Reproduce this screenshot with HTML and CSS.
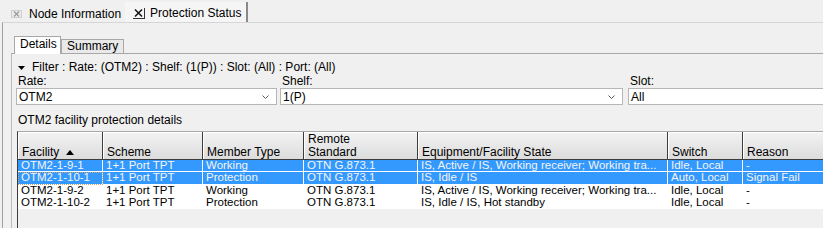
FILE: index.html
```html
<!DOCTYPE html>
<html lang="en">
<head>
    <meta charset="UTF-8">
    <meta name="viewport" content="width=device-width, initial-scale=1.0">
    <title>Protection Status</title>
    <link rel="stylesheet" href="styles.css">
</head>
<body>
    <div class="window">
        <div class="doc-tabs">
            <div class="doc-tab">
                <svg class="close-icon faded" width="11" height="8" viewBox="0 0 11 8">
                    <rect x="0.5" y="0.5" width="10" height="7" fill="#ebebeb" stroke="#cfcfcf"/>
                    <path d="M3 1.5 L8 6.5 M8 1.5 L3 6.5" stroke="#9a9a9a" stroke-width="1.2"/>
                </svg>
                <span>Node Information</span>
            </div>
            <div class="doc-tab active">
                <svg class="close-icon" width="13" height="11" viewBox="0 0 13 11">
                    <path d="M2 1.5 L9 8.5 M9 1.5 L2 8.5" stroke="#111" stroke-width="1.5"/>
                    <path d="M0 10.5 H12 M11.5 0 V11" stroke="#333" stroke-width="1"/>
                </svg>
                <span>Protection Status</span>
            </div>
        </div>

        <div class="doc-panel">
            <div class="sub-tabs">
                <div class="sub-tab selected">Details</div>
                <div class="sub-tab">Summary</div>
            </div>

            <div class="sub-panel">
                <div class="filter-title">
                    <svg width="7" height="4" viewBox="0 0 7 4"><path d="M0 0 H7 L3.5 4 Z" fill="#000"/></svg>
                    <span>Filter : Rate: (OTM2) : Shelf: (1(P)) : Slot: (All) : Port: (All)</span>
                </div>

                <div class="fields">
                    <div class="field rate">
                        <label>Rate:</label>
                        <div class="combo"><span>OTM2</span><svg class="chevron" width="7" height="4" viewBox="0 0 7 4"><path d="M0.5 0.5 L3.5 3.5 L6.5 0.5" fill="none" stroke="#5a5a5a"/></svg></div>
                    </div>
                    <div class="field shelf">
                        <label>Shelf:</label>
                        <div class="combo"><span>1(P)</span><svg class="chevron" width="7" height="4" viewBox="0 0 7 4"><path d="M0.5 0.5 L3.5 3.5 L6.5 0.5" fill="none" stroke="#5a5a5a"/></svg></div>
                    </div>
                    <div class="field slot">
                        <label>Slot:</label>
                        <div class="combo"><span>All</span></div>
                    </div>
                </div>

                <div class="caption">OTM2 facility protection details</div>

                <div class="table-wrap">
                    <table class="grid">
                        <colgroup>
                            <col class="c-facility">
                            <col class="c-scheme">
                            <col class="c-member">
                            <col class="c-remote">
                            <col class="c-state">
                            <col class="c-switch">
                            <col class="c-reason">
                        </colgroup>
                        <tr class="head">
                            <th>Facility <svg class="sort" width="8" height="5" viewBox="0 0 8 5"><path d="M0 5 L4 0 L8 5 Z" fill="#000"/></svg></th>
                            <th>Scheme</th>
                            <th>Member Type</th>
                            <th>Remote<br>Standard</th>
                            <th>Equipment/Facility State</th>
                            <th>Switch</th>
                            <th>Reason</th>
                        </tr>
                        <tr class="selected">
                            <td>OTM2-1-9-1</td>
                            <td>1+1 Port TPT</td>
                            <td>Working</td>
                            <td>OTN G.873.1</td>
                            <td>IS, Active / IS, Working receiver; Working tra...</td>
                            <td>Idle, Local</td>
                            <td>-</td>
                        </tr>
                        <tr class="selected">
                            <td class="focus">OTM2-1-10-1</td>
                            <td>1+1 Port TPT</td>
                            <td>Protection</td>
                            <td>OTN G.873.1</td>
                            <td>IS, Idle / IS</td>
                            <td>Auto, Local</td>
                            <td>Signal Fail</td>
                        </tr>
                        <tr>
                            <td>OTM2-1-9-2</td>
                            <td>1+1 Port TPT</td>
                            <td>Working</td>
                            <td>OTN G.873.1</td>
                            <td>IS, Active / IS, Working receiver; Working tra...</td>
                            <td>Idle, Local</td>
                            <td>-</td>
                        </tr>
                        <tr>
                            <td>OTM2-1-10-2</td>
                            <td>1+1 Port TPT</td>
                            <td>Protection</td>
                            <td>OTN G.873.1</td>
                            <td>IS, Idle / IS, Hot standby</td>
                            <td>Idle, Local</td>
                            <td>-</td>
                        </tr>
                    </table>
                </div>
            </div>
        </div>
    </div>
</body>
</html>
```

FILE: styles.css
```css
* {
    margin: 0;
    padding: 0;
    box-sizing: border-box;
}
body {
    background: #f0f0f0;
    font-family: 'Liberation Sans', Arial, sans-serif;
    font-size: 12px;
    color: #000;
    overflow: hidden;
}
.window {
    width: 823px;
    height: 228px;
    overflow: hidden;
}

/* document tabs */
.doc-tabs {
    display: flex;
    height: 22px;
    padding-left: 8px;
}
.doc-tab {
    display: flex;
    align-items: center;
    gap: 7px;
    padding: 5px 4px 0 3px;
    line-height: 14px;
}
.doc-tab.active {
    margin-top: 2px;
    padding: 2px 5px 0 8px;
    gap: 4px;
    background: #f5f5f5;
    border-right: 2px solid #8a8a8a;
}
.close-icon {
    flex: none;
}

.doc-panel {
    margin-left: 2px;
    border-top: 1px solid #d6d6d6;
    border-left: 1px solid #a0a0a0;
    padding: 13px 0 0 8px;
}

/* inner tabs */
.sub-tabs {
    display: flex;
    align-items: flex-end;
    height: 17px;
    padding-left: 3px;
}
.sub-tab {
    height: 14px;
    padding: 0 5px;
    line-height: 13px;
    background: #e9e9e9;
    border: 1px solid #a8a8a8;
    border-bottom: none;
}
.sub-tab.selected {
    position: relative;
    z-index: 1;
    width: 47px;
    height: 18px;
    margin-bottom: -1px;
    padding-top: 1px;
    line-height: 12px;
    text-align: center;
    background: #fff;
}

.sub-panel {
    height: 180px;
    border-top: 1px solid #a8a8a8;
    border-left: 1px solid #bcbcbc;
    padding: 7px 0 0 4px;
}
.filter-title {
    display: flex;
    align-items: center;
    gap: 7px;
    padding-left: 2px;
    line-height: 13px;
}

/* filter fields */
.fields {
    display: grid;
    grid-template-columns: 264px 348px 1fr;
}
.field label {
    display: block;
    padding-left: 2px;
    line-height: 14px;
}
.combo {
    display: flex;
    align-items: center;
    justify-content: space-between;
    height: 17px;
    padding: 0 7px 0 2px;
    background: #fff;
    border: 1px solid #b6b6b6;
}
.rate .combo { width: 261px; }
.shelf .combo { width: 343px; }
.slot .combo { width: 210px; }

.caption {
    margin: 8px 0 4px;
    padding-left: 2px;
    line-height: 14px;
}

/* table */
.table-wrap {
    height: 100px;
    margin-left: 1px;
    border-left: 1px solid #3c3c3c;
    border-top: 1px solid #a8a8a8;
    background: #f0f0f0;
    overflow: hidden;
}
.grid {
    width: 845px;
    table-layout: fixed;
    border-collapse: separate;
    border-spacing: 0;
}
.c-facility { width: 85px; }
.c-scheme { width: 100px; }
.c-member { width: 101px; }
.c-remote { width: 114px; }
.c-state { width: 250px; }
.c-switch { width: 75px; }
.c-reason { width: 120px; }

.grid tr.head {
    height: 28px;
}
.grid th {
    padding: 0 3px 0 4px;
    font-weight: normal;
    text-align: left;
    vertical-align: bottom;
    line-height: 13px;
    white-space: nowrap;
    background: linear-gradient(#f3f3f3, #dcdcdc);
    border-right: 1px solid #3c3c3c;
    border-bottom: 1px solid #3c3c3c;
    box-shadow: inset 1px 1px #fff;
}
.sort {
    margin-left: 3px;
    vertical-align: 1px;
}
.grid td {
    height: 12.33px;
    padding: 0 3px;
    font-size: 11.5px;
    line-height: 11.33px;
    white-space: nowrap;
    background: #fff;
    border-right: 1px solid #fff;
    border-bottom: 1px solid #fff;
}
.grid tr.selected td {
    background: #3399ff;
    color: #f4f4f4;
}
.grid td.focus {
    outline: 1px dotted #c8a878;
    outline-offset: -1px;
}
```
